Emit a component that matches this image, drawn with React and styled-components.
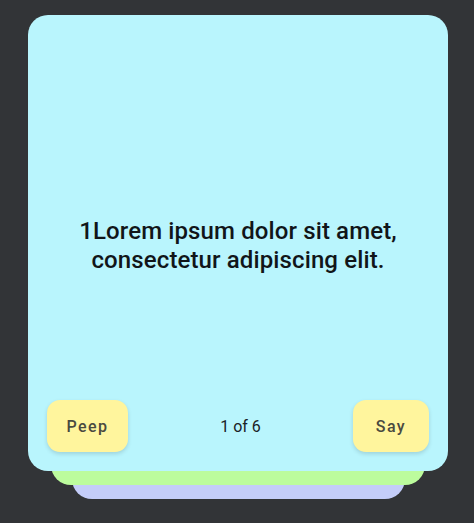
import React from "react";
import styled, { createGlobalStyle } from "styled-components";

const GlobalStyle = createGlobalStyle`
  html, body {
    margin: 0;
    padding: 0;
    background: #323437;
    font-family: Roboto, "Liberation Sans", sans-serif;
  }
`;

const Page = styled.div`
  width: 474px;
  height: 523px;
  padding: 15px 0 0 28px;
  box-sizing: border-box;
`;

const Stack = styled.div`
  display: grid;
  width: 420px;
`;

const BackCard = styled.div`
  grid-area: 1 / 1;
  justify-self: center;
  width: ${(p) => p.width}px;
  height: 456px;
  margin-top: ${(p) => p.offset}px;
  background: ${(p) => p.color};
  border-radius: 20px;
`;

const Card = styled.div`
  grid-area: 1 / 1;
  position: relative;
  display: flex;
  flex-direction: column;
  width: 420px;
  height: 456px;
  box-sizing: border-box;
  padding: 77px 19px 19px;
  background: #b9f5fd;
  border-radius: 20px;
`;

const Body = styled.div`
  flex: 1;
  display: flex;
  align-items: center;
  justify-content: center;
  text-align: center;
  padding: 0 20px;
`;

const Phrase = styled.p`
  margin: 0;
  font-size: 24px;
  font-weight: 500;
  line-height: 29px;
  letter-spacing: 0.12px;
  color: #111519;
`;

const Footer = styled.div`
  display: flex;
  align-items: center;
  justify-content: space-between;
`;

const Action = styled.button`
  width: ${(p) => p.width}px;
  height: 52px;
  border: none;
  border-radius: 13px;
  background: #fff59d;
  box-shadow: 0 2px 4px rgba(0, 0, 0, 0.14);
  font-family: Roboto, "Liberation Sans", sans-serif;
  font-size: 16px;
  font-weight: 500;
  letter-spacing: 1.4px;
  color: #4a4a40;
  cursor: pointer;
`;

const Counter = styled.span`
  font-size: 16px;
  color: #1b2226;
`;

export default function App() {
  return (
    <>
      <GlobalStyle />
      <Page>
        <Stack>
          <BackCard width={333} offset={28} color="#c4cdf9" />
          <BackCard width={374} offset={14} color="#bcfc9d" />
          <Card>
            <Body>
              <Phrase>1Lorem ipsum dolor sit amet, consectetur adipiscing elit.</Phrase>
            </Body>
            <Footer>
              <Action width={81}>Peep</Action>
              <Counter>1 of 6</Counter>
              <Action width={76}>Say</Action>
            </Footer>
          </Card>
        </Stack>
      </Page>
    </>
  );
}
